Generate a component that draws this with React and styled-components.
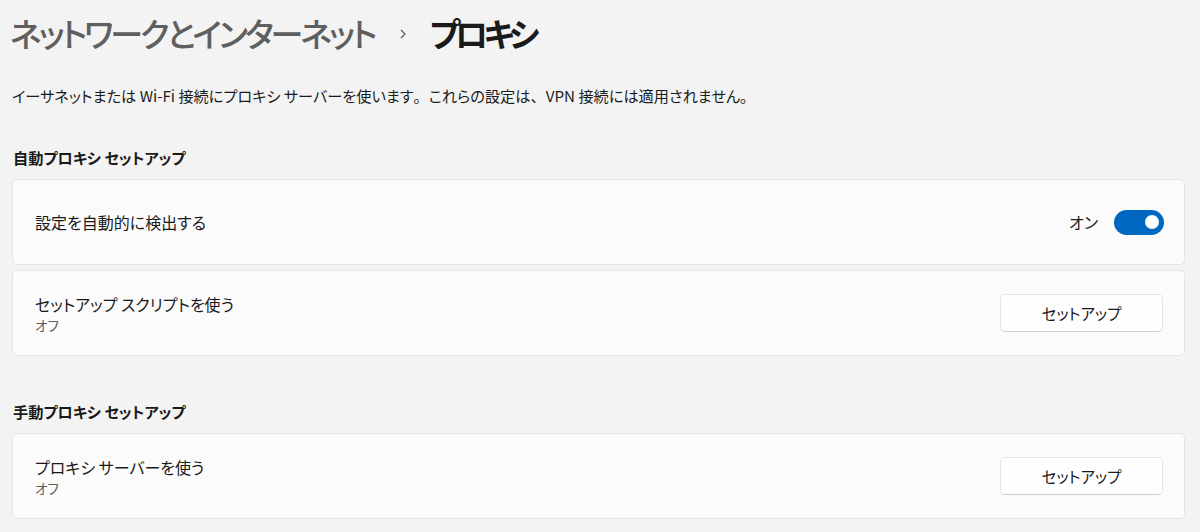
import React from 'react'
import styled, { createGlobalStyle } from 'styled-components'

const GlobalStyle = createGlobalStyle`
  html, body {
    margin: 0;
    padding: 0;
    background: #f3f3f3;
  }
  body {
    font-family: "Noto Sans CJK JP", "Noto Sans", sans-serif;
    font-feature-settings: "palt";
    color: #1a1a1a;
  }
`

const Page = styled.div`
  display: flex;
  flex-direction: column;
  padding: 11px 15px 0 12px;
`
const Breadcrumb = styled.h1`
  display: flex;
  align-items: center;
  margin: 0 0 0 -2px;
  height: 44px;
  font-size: 33px;
  font-weight: 500;
  line-height: 44px;
`
const Parent = styled.span`
  color: #5f5f5f;
  letter-spacing: -3px;
`
const Current = styled.span`
  color: #1a1a1a;
  font-weight: 700;
  letter-spacing: -5px;
`
const Chevron = styled.svg`
  width: 8px;
  height: 10px;
  margin: 2px 22px 0 25px;
`
const Description = styled.p`
  margin: 28px 0 0;
  font-size: 15.2px;
  line-height: 24px;
  color: #1b1b1b;
`
const Punct = styled.span`
  font-feature-settings: normal;
`
const SectionTitle = styled.h2`
  margin: ${p => p.$top}px 0 10px 1px;
  font-size: 15.2px;
  font-weight: 700;
  line-height: 24px;
`
const Cards = styled.div`
  display: flex;
  flex-direction: column;
  gap: 5px;
`
const Card = styled.div`
  box-sizing: border-box;
  height: 86px;
  display: flex;
  align-items: center;
  justify-content: space-between;
  padding: 0 20px 0 22px;
  background: #fbfbfb;
  border: 1px solid #e5e5e5;
  border-radius: 5px;
`
const Labels = styled.div`
  display: flex;
  flex-direction: column;
  margin-top: 2px;
`
const Label = styled.div`
  font-size: 16px;
  line-height: 22px;
  color: #1a1a1a;
`
const Sub = styled.div`
  font-size: 13.5px;
  line-height: 20px;
  color: #5d5d5d;
`
const Control = styled.div`
  display: flex;
  align-items: center;
  gap: 16px;
  font-size: 16px;
`
const Toggle = styled.div`
  box-sizing: border-box;
  width: 50px;
  height: 25px;
  border-radius: 13px;
  background: #0067c0;
  display: flex;
  align-items: center;
  justify-content: flex-end;
  padding-right: 5px;
`
const Knob = styled.div`
  width: 14px;
  height: 14px;
  border-radius: 50%;
  background: #fff;
`
const Button = styled.button`
  box-sizing: border-box;
  width: 163px;
  height: 38px;
  margin-right: 1px;
  font-family: inherit;
  font-feature-settings: "palt";
  font-size: 15.5px;
  color: #1a1a1a;
  background: #fefefe;
  border: 1px solid #e5e5e5;
  border-bottom-color: #cccccc;
  border-radius: 5px;
`

const App = () => {
  return (<>
    <GlobalStyle />
    <Page>
      <Breadcrumb>
        <Parent>ネットワークとインターネット</Parent>
        <Chevron viewBox="0 0 8 10">
          <path d="M2 1 L6 5 L2 9" fill="none" stroke="#5f5f5f" strokeWidth="1.3" />
        </Chevron>
        <Current>プロキシ</Current>
      </Breadcrumb>
      <Description>
        イーサネットまたは Wi-Fi 接続にプロキシ サーバーを使います<Punct>。</Punct>これらの設定は<Punct>、</Punct>VPN 接続には適用されません<Punct>。</Punct>
      </Description>

      <SectionTitle $top={38}>自動プロキシ セットアップ</SectionTitle>
      <Cards>
        <Card>
          <Label>設定を自動的に検出する</Label>
          <Control>
            オン
            <Toggle><Knob /></Toggle>
          </Control>
        </Card>
        <Card>
          <Labels>
            <Label>セットアップ スクリプトを使う</Label>
            <Sub>オフ</Sub>
          </Labels>
          <Button>セットアップ</Button>
        </Card>
      </Cards>

      <SectionTitle $top={43}>手動プロキシ セットアップ</SectionTitle>
      <Cards>
        <Card>
          <Labels>
            <Label>プロキシ サーバーを使う</Label>
            <Sub>オフ</Sub>
          </Labels>
          <Button>セットアップ</Button>
        </Card>
      </Cards>
    </Page>
  </>)
}

export default App
